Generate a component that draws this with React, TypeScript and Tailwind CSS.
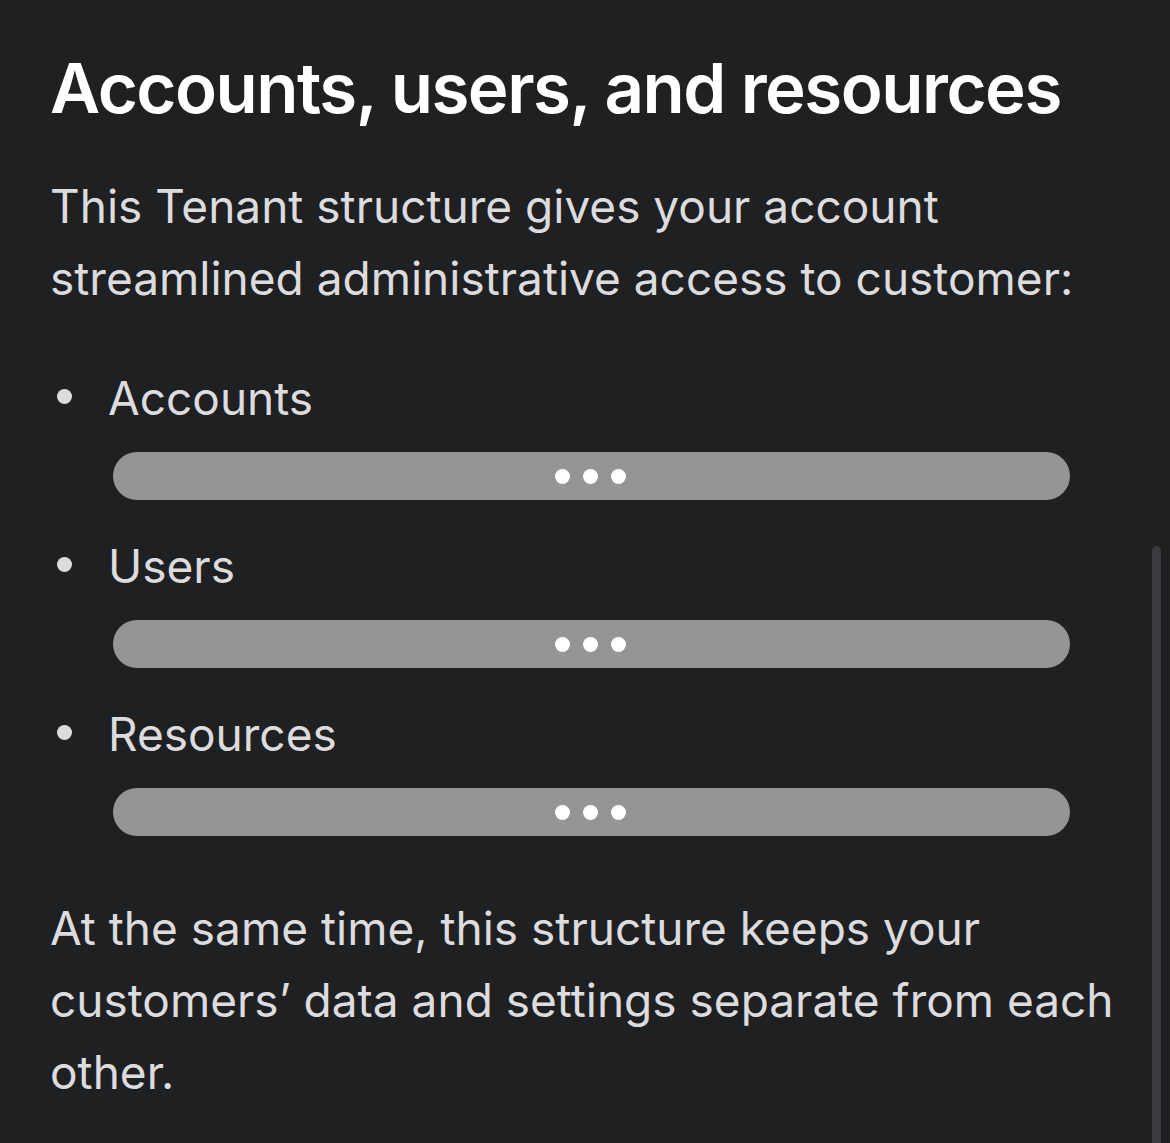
const items = ['Accounts', 'Users', 'Resources'];

const Collapsed = () => {
  return (
    <div className="flex items-center justify-center gap-[13px] h-[48px] w-[957px] ml-[63px] pr-[3px] rounded-full bg-[#959595]">
      <span className="block w-[15px] h-[15px] rounded-full bg-white" />
      <span className="block w-[15px] h-[15px] rounded-full bg-white" />
      <span className="block w-[15px] h-[15px] rounded-full bg-white" />
    </div>
  );
};

export default function App() {
  return (
    <div className="relative min-h-[1143px] w-full bg-[#1f2022] font-['Inter','Noto_Sans',sans-serif] text-[#dcdcdf] overflow-hidden">
      <div className="pl-[50px] pt-[46px] pr-[40px]">
        <h1 className="text-[69px] leading-[84px] font-semibold text-white tracking-[-1.5px]">
          Accounts, users, and resources
        </h1>
        <p className="mt-[40px] text-[46px] leading-[72px]">
          This Tenant structure gives your account streamlined administrative
          access to customer:
        </p>
        <ul className="mt-[48px] flex flex-col">
          {items.map((item) => (
            <li key={item} className="flex flex-col pb-[30px]">
              <div className="flex items-center h-[72px]">
                <span className="block w-[15px] h-[15px] rounded-full bg-[#dcdcdf] ml-[7px] mr-[36px] mt-[-4px]" />
                <span className="text-[46px] leading-[72px]">{item}</span>
              </div>
              <div className="mt-[18px]">
                <Collapsed />
              </div>
            </li>
          ))}
        </ul>
        <p className="mt-[26px] text-[46px] leading-[72px] w-[1075px]">
          At the same time, this structure keeps your customers’ data and
          settings separate from each other.
        </p>
      </div>
      <div className="absolute right-[9px] top-[546px] bottom-0 w-[9px] rounded-t-full bg-[#3a3b3e]" />
    </div>
  );
}
